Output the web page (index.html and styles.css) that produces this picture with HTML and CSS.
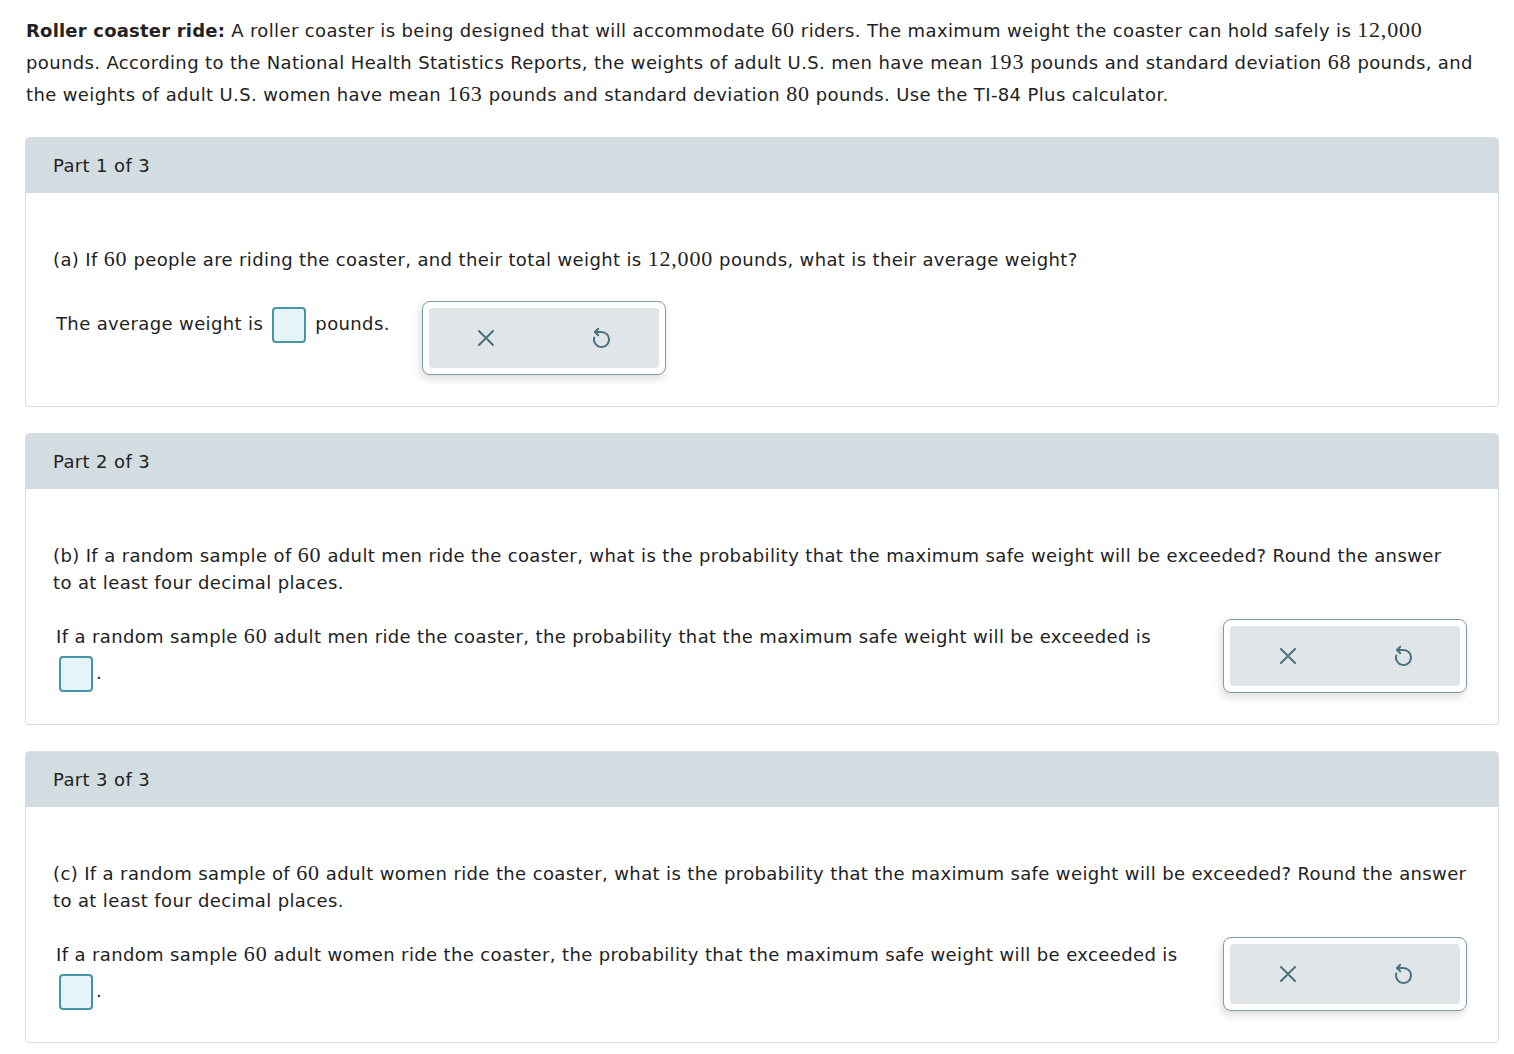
FILE: index.html
```html
<!DOCTYPE html>
<html lang="en">
<head>
<meta charset="utf-8">
<title>Roller coaster ride</title>
<link rel="stylesheet" href="styles.css">
</head>
<body>
<div class="page">
  <p class="intro"><b>Roller coaster ride:</b> A roller coaster is being designed that will accommodate <span class="m">60</span> riders. The maximum weight the coaster can hold safely is <span class="m">12,000</span> pounds. According to the National Health Statistics Reports, the weights of adult U.S. men have mean <span class="m">193</span> pounds and standard deviation <span class="m">68</span> pounds, and the weights of adult U.S. women have mean <span class="m">163</span> pounds and standard deviation <span class="m">80</span> pounds. Use the TI-84 Plus calculator.</p>

  <section class="part">
    <div class="part-head">Part 1 of 3</div>
    <div class="part-body">
      <p class="question">(a) If <span class="m">60</span> people are riding the coaster, and their total weight is <span class="m">12,000</span> pounds, what is their average weight?</p>
      <div class="answer answer--first">
        <div class="answer-text">The average weight is <span class="box"></span> pounds.</div>
        <div class="panel">
          <div class="panel-inner">
            <button class="tool" type="button" aria-label="Clear">
              <svg width="16" height="16" viewBox="0 0 16 16"><path d="M1 1 L15 15 M15 1 L1 15" stroke="#4b717d" stroke-width="2" fill="none" stroke-linecap="round"/></svg>
            </button>
            <button class="tool" type="button" aria-label="Undo">
              <svg width="18" height="22" viewBox="0 0 18 22"><path d="M3 5 H9.5 A7.5 7.5 0 1 1 2.26 10.56" stroke="#4b717d" stroke-width="2" fill="none" stroke-linecap="round" stroke-linejoin="round"/><path d="M6.2 1.8 L3 5 L6.2 8.2" stroke="#4b717d" stroke-width="2" fill="none" stroke-linecap="round" stroke-linejoin="round"/></svg>
            </button>
          </div>
        </div>
      </div>
    </div>
  </section>

  <section class="part">
    <div class="part-head">Part 2 of 3</div>
    <div class="part-body">
      <p class="question">(b) If a random sample of <span class="m">60</span> adult men ride the coaster, what is the probability that the maximum safe weight will be exceeded? Round the answer<br>to at least four decimal places.</p>
      <div class="answer">
        <div class="answer-text">If a random sample <span class="m">60</span> adult men ride the coaster, the probability that the maximum safe weight will be exceeded is <span class="box"></span>.</div>
        <div class="panel">
          <div class="panel-inner">
            <button class="tool" type="button" aria-label="Clear">
              <svg width="16" height="16" viewBox="0 0 16 16"><path d="M1 1 L15 15 M15 1 L1 15" stroke="#4b717d" stroke-width="2" fill="none" stroke-linecap="round"/></svg>
            </button>
            <button class="tool" type="button" aria-label="Undo">
              <svg width="18" height="22" viewBox="0 0 18 22"><path d="M3 5 H9.5 A7.5 7.5 0 1 1 2.26 10.56" stroke="#4b717d" stroke-width="2" fill="none" stroke-linecap="round" stroke-linejoin="round"/><path d="M6.2 1.8 L3 5 L6.2 8.2" stroke="#4b717d" stroke-width="2" fill="none" stroke-linecap="round" stroke-linejoin="round"/></svg>
            </button>
          </div>
        </div>
      </div>
    </div>
  </section>

  <section class="part">
    <div class="part-head">Part 3 of 3</div>
    <div class="part-body">
      <p class="question">(c) If a random sample of <span class="m">60</span> adult women ride the coaster, what is the probability that the maximum safe weight will be exceeded? Round the answer to at least four decimal places.</p>
      <div class="answer">
        <div class="answer-text">If a random sample <span class="m">60</span> adult women ride the coaster, the probability that the maximum safe weight will be exceeded is <span class="box"></span>.</div>
        <div class="panel">
          <div class="panel-inner">
            <button class="tool" type="button" aria-label="Clear">
              <svg width="16" height="16" viewBox="0 0 16 16"><path d="M1 1 L15 15 M15 1 L1 15" stroke="#4b717d" stroke-width="2" fill="none" stroke-linecap="round"/></svg>
            </button>
            <button class="tool" type="button" aria-label="Undo">
              <svg width="18" height="22" viewBox="0 0 18 22"><path d="M3 5 H9.5 A7.5 7.5 0 1 1 2.26 10.56" stroke="#4b717d" stroke-width="2" fill="none" stroke-linecap="round" stroke-linejoin="round"/><path d="M6.2 1.8 L3 5 L6.2 8.2" stroke="#4b717d" stroke-width="2" fill="none" stroke-linecap="round" stroke-linejoin="round"/></svg>
            </button>
          </div>
        </div>
      </div>
    </div>
  </section>
</div>
</body>
</html>
```

FILE: styles.css
```css
html, body {
  margin: 0;
  background: #ffffff;
}

body {
  font-family: "DejaVu Sans", Verdana, sans-serif;
  font-size: 18px;
  letter-spacing: 0.37px;
  color: #222222;
}

.page {
  padding: 15px 15px 10px 25px;
}

.m {
  font-family: "Liberation Serif", "Times New Roman", serif;
  font-size: 22px;
  line-height: 1;
  letter-spacing: 0.8px;
}

.intro {
  margin: 0;
  padding-left: 1px;
  line-height: 32px;
}

.intro b {
  letter-spacing: 0.2px;
}

.part {
  margin-top: 26px;
  border: 1px solid #d5dee2;
  border-radius: 4px;
  overflow: hidden;
}

.part-head {
  height: 55px;
  background: #d3dce0;
  display: flex;
  align-items: center;
  padding: 0 27px;
}

.part-body {
  padding: 0 27px 31px 27px;
}

.question {
  margin: 53px 0 0;
  line-height: 27px;
}

.answer {
  display: flex;
  align-items: flex-start;
  gap: 32px;
  margin-top: 23px;
}

.answer--first {
  margin-top: 28px;
}

.answer--first .answer-text {
  padding-top: 5px;
}

.answer-text {
  padding-left: 3px;
  line-height: 36px;
}

.box {
  display: inline-block;
  box-sizing: border-box;
  width: 34px;
  height: 36px;
  margin: 0 3px;
  border: 2px solid #4595a6;
  border-radius: 4px;
  background: #e5f4f8;
  vertical-align: middle;
}

.panel {
  flex: 0 0 auto;
  margin-left: auto;
  margin-right: 4px;
  box-sizing: border-box;
  width: 244px;
  height: 74px;
  padding: 6px;
  border: 1px solid #7e9ca6;
  border-radius: 8px;
  background: #ffffff;
  box-shadow: -2px 4px 8px rgba(0, 0, 0, 0.14);
}

.answer--first .panel {
  margin-left: 0;
}

.panel-inner {
  display: flex;
  height: 100%;
  background: #dfe5e8;
  border-radius: 4px;
}

.tool {
  flex: 1;
  display: flex;
  align-items: center;
  justify-content: center;
  border: 0;
  padding: 0;
  background: transparent;
}
```
